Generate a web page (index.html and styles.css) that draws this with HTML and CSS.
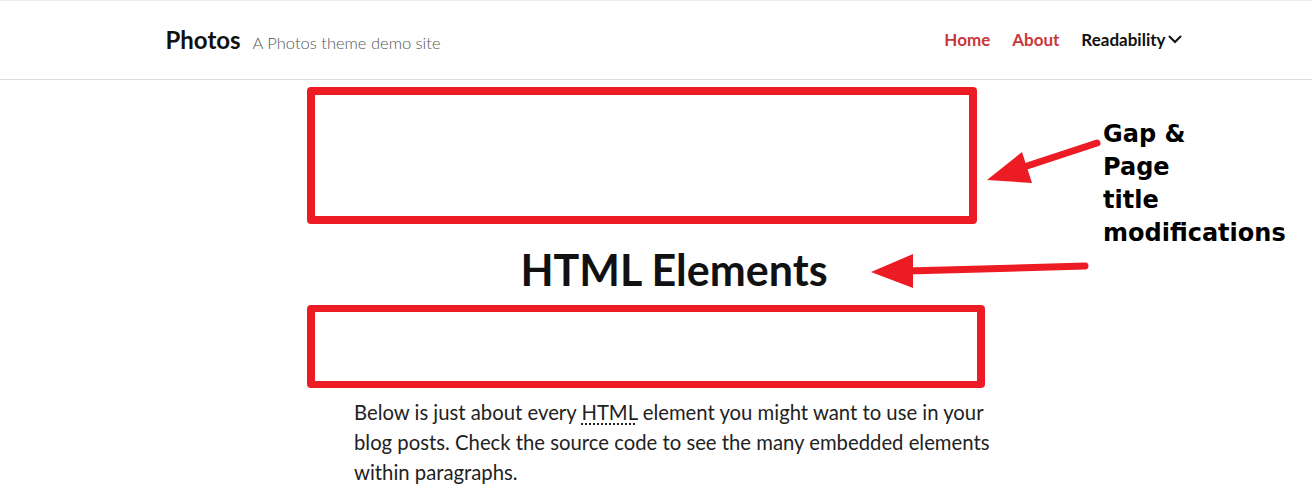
FILE: index.html
```html
<!DOCTYPE html>
<html lang="en">

<head>
    <meta charset="UTF-8" />
    <meta name="viewport" content="width=device-width, initial-scale=1.0" />
    <title>HTML Elements | Photos</title>
    <link rel="stylesheet" href="styles.css">
</head>

<body>
    <header class="site-header">
        <div class="wrap">
            <div class="brand">
                <a class="site-title" href="#">Photos</a>
                <span class="tagline">A Photos theme demo site</span>
            </div>
            <nav class="menu">
                <a href="#">Home</a>
                <a href="#">About</a>
                <button class="dropdown">Readability
                    <svg width="16" height="16" viewBox="0 0 16 16">
                        <path d="M2.5 5.5 L8 11 L13.5 5.5" fill="none" stroke="currentColor" stroke-width="2" stroke-linecap="round" />
                    </svg>
                </button>
            </nav>
        </div>
    </header>

    <main class="post">
        <div class="gap-box top"></div>
        <h1 class="page-title">HTML Elements</h1>
        <div class="gap-box bottom"></div>
        <p>Below is just about every <abbr title="HyperText Markup Language">HTML</abbr> element you might want to use in your blog posts. Check the source code to see the many embedded elements within paragraphs.</p>
    </main>

    <!-- annotation layer drawn over the page -->
    <div class="annotations">
        <svg class="arrows" width="1312" height="486" viewBox="0 0 1312 486">
            <line x1="1097" y1="143" x2="1024" y2="167" />
            <polygon points="987,180 1022,152 1032,183" />
            <line x1="1085" y1="266" x2="908" y2="271" />
            <polygon points="871,272 913,254 913,288" />
        </svg>
        <div class="note">Gap &amp;<br>Page<br>title<br>modifications</div>
    </div>
</body>

</html>
```

FILE: styles.css
```css
body {
    font-family: Lato, 'Noto Sans', sans-serif;
    margin: 0;
    padding-left: 36px;
    background: #fff;
    color: #222;
}

a {
    text-decoration: none;
}

.site-header {
    border-top: 1px solid #ececec;
    border-bottom: 1px solid #dcdcdc;
    margin-left: -36px;
    padding-left: 36px;
}

.wrap {
    max-width: 1017px;
    margin: 0 auto;
    height: 78px;
    display: flex;
    align-items: center;
    justify-content: space-between;
}

.brand {
    display: flex;
    align-items: baseline;
    gap: 12px;
    padding-bottom: 2px;
}

.site-title {
    font-size: 24px;
    font-weight: bold;
    color: #111;
}

.tagline {
    font-size: 16.5px;
    font-weight: 300;
    color: #555;
}

.menu {
    display: flex;
    align-items: center;
    gap: 22px;
    padding-bottom: 2px;
}

.menu a {
    font-size: 17px;
    font-weight: bold;
    color: #c8383b;
}

.dropdown {
    display: flex;
    align-items: center;
    gap: 1px;
    padding: 0;
    border: 0;
    background: none;
    font: bold 17px Lato, sans-serif;
    color: #111;
}

.post {
    width: 640px;
    margin: 0 auto;
}

.gap-box {
    box-sizing: border-box;
    margin-left: -47px;
    border: 8px solid #ed1c24;
    border-radius: 4px;
}

.gap-box.top {
    width: 670px;
    height: 137px;
    margin-top: 7px;
}

.gap-box.bottom {
    width: 678px;
    height: 83px;
    border-width: 7px 8px;
}

.page-title {
    margin: 18px 0 8px;
    font-size: 43px;
    line-height: 55px;
    text-align: center;
    color: #111;
}

.post p {
    margin: 9px 0 0;
    font-size: 20.3px;
    line-height: 30px;
}

abbr {
    text-decoration: underline dotted;
    text-underline-offset: 3px;
}

.annotations {
    position: absolute;
    top: 0;
    left: 0;
    width: 1312px;
    height: 486px;
    pointer-events: none;
}

.arrows line {
    stroke: #ed1c24;
    stroke-width: 7;
    stroke-linecap: round;
}

.arrows polygon {
    fill: #ed1c24;
}

.note {
    position: absolute;
    top: 118px;
    left: 1103px;
    font: bold 24px/33px 'DejaVu Sans', sans-serif;
    color: #000;
}
```
